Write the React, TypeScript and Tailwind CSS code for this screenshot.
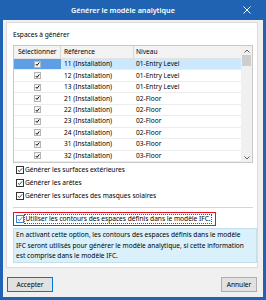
import React from 'react';

const rows = [
  { ref: '11 (Installation)', niveau: '01-Entry Level' },
  { ref: '12 (Installation)', niveau: '01-Entry Level' },
  { ref: '13 (Installation)', niveau: '01-Entry Level' },
  { ref: '21 (Installation)', niveau: '02-Floor' },
  { ref: '22 (Installation)', niveau: '02-Floor' },
  { ref: '23 (Installation)', niveau: '02-Floor' },
  { ref: '24 (Installation)', niveau: '02-Floor' },
  { ref: '31 (Installation)', niveau: '03-Floor' },
  { ref: '32 (Installation)', niveau: '03-Floor' },
];

const Check: React.FC<{ size?: number; blue?: boolean }> = ({ size = 8, blue }) => (
  <span
    className={`shrink-0 flex items-center justify-center bg-white border ${blue ? 'border-[#3c7fd1]' : 'border-[#333]'}`}
    style={{ width: size, height: size }}
  >
    <svg viewBox="0 0 10 10" width={size - 2} height={size - 2}>
      <path d="M1.5 5.2 L4 7.6 L8.6 2.2" fill="none" stroke={blue ? '#2a6fc9' : '#222'} strokeWidth="1.4" />
    </svg>
  </span>
);

const SmallCheck: React.FC = () => (
  <span className="flex items-center justify-center w-[7px] h-[7px] bg-[#f4f4f4] border border-[#b5b5b5]">
    <svg viewBox="0 0 10 10" width={6} height={6}>
      <path d="M1.5 5 L4 7.8 L8.6 2" fill="none" stroke="#111" strokeWidth="2" />
    </svg>
  </span>
);

const App: React.FC = () => {
  return (
    <div
      className="w-[266px] h-[300px] bg-[#1f63b2] flex flex-col px-[3px] pb-[3px] text-black"
      style={{ fontFamily: '"Noto Sans", "Open Sans", sans-serif' }}
    >
      {/* Barre de titre */}
      <div className="h-[20px] flex items-center relative">
        <span className="ml-[68px] text-white text-[7.2px] font-semibold">Générer le modèle analytique</span>
        <svg className="absolute right-[12px] top-[6px]" width="8" height="8" viewBox="0 0 8 8">
          <path d="M0.5 0.5 L7.5 7.5 M7.5 0.5 L0.5 7.5" stroke="#fff" strokeWidth="1" />
        </svg>
      </div>

      <div className="flex-1 bg-[#f0f0f0] flex flex-col pt-[2px]">
        {/* Panneau principal */}
        <div className="ml-[3px] mr-[5px] h-[246px] bg-white border border-[#dcdcdc] pl-[6px] pr-[1px] flex flex-col text-[6.6px]">
          <div className="h-[22px] pt-[7px] leading-[10px]">Espaces à générer</div>

          {/* Tableau */}
          <div className="w-[240px] h-[118px] border border-[#c8c8c8] flex">
            <div className="flex-1 flex flex-col">
              <div className="h-[13px] flex bg-[#f3f3f3] border-b border-[#e2e2e2] items-center">
                <div className="w-[47px] pl-[4px] border-r border-[#d9d9d9] h-full flex items-center">Sélectionner</div>
                <div className="w-[73px] pl-[3px] border-r border-[#d9d9d9] h-full flex items-center">Référence</div>
                <div className="flex-1 pl-[2px]">Niveau</div>
              </div>
              {rows.map((r, i) => (
                <div key={r.ref} className="h-[11.6px] flex items-center border-b border-[#ececec]">
                  <div className={`w-[47px] h-full flex items-center justify-center ${i === 0 ? 'bg-[#5d9ee4]' : ''}`}>
                    <SmallCheck />
                  </div>
                  <div className={`w-[73px] h-full flex items-center pl-[3px] ${i === 0 ? 'bg-[#cce8ff]' : ''}`}>{r.ref}</div>
                  <div className={`flex-1 h-full flex items-center pl-[2px] ${i === 0 ? 'bg-[#cce8ff]' : ''}`}>{r.niveau}</div>
                </div>
              ))}
            </div>
            {/* Barre de défilement */}
            <div className="w-[11px] bg-[#f0f0f0] flex flex-col items-center">
              <div className="h-[9px] flex items-center justify-center">
                <svg width="6" height="4" viewBox="0 0 6 4">
                  <path d="M0.5 3.5 L3 1 L5.5 3.5" fill="none" stroke="#606060" strokeWidth="1" />
                </svg>
              </div>
              <div className="w-[9px] h-[11px] bg-[#cdcdcd]" />
              <div className="flex-1" />
              <div className="h-[9px] flex items-center justify-center">
                <svg width="6" height="4" viewBox="0 0 6 4">
                  <path d="M0.5 0.5 L3 3 L5.5 0.5" fill="none" stroke="#606060" strokeWidth="1" />
                </svg>
              </div>
            </div>
          </div>

          {/* Options */}
          <div className="flex flex-col gap-[5px] mt-[3px] pl-[3px] leading-[8px]">
            <label className="flex items-center gap-[1px] h-[8px]"><Check />Générer les surfaces extérieures</label>
            <label className="flex items-center gap-[1px] h-[8px]"><Check />Générer les arêtes</label>
            <label className="flex items-center gap-[1px] h-[8px]"><Check />Générer les surfaces des masques solaires</label>
          </div>

          <div className="mt-[7px] w-[240px] border-t border-[#d6d6d6]" />

          <div className="mt-[4px] w-[203px] h-[14px] border-[1.5px] border-[#e81123] flex items-center pl-[2px] gap-[1px] whitespace-nowrap">
            <Check blue />
            <span className="outline outline-1 outline-dotted outline-[#555] leading-[8px] px-[0.5px]">
              Utiliser les contours des espaces définis dans le modèle IFC.
            </span>
          </div>

          <div className="mt-[2px] w-[244px] h-[35px] bg-[#daf0fa] border border-[#c4dfea] px-[2px] pt-[1px] leading-[10.5px] whitespace-nowrap">
            En activant cette option, les contours des espaces définis dans le modèle
            <br />
            IFC seront utilisés pour générer le modèle analytique, si cette information
            <br />
            est comprise dans le modèle IFC.
          </div>
        </div>

        {/* Boutons */}
        <div className="flex-1 flex items-start justify-between pl-[4px] pr-[6px] pt-[9px] text-[6.6px]">
          <button className="w-[46px] h-[15px] bg-[#e1e1e1] border border-[#0078d7] flex items-center justify-center">
            Accepter
          </button>
          <button className="w-[36px] h-[15px] bg-[#e1e1e1] border border-[#adadad] flex items-center justify-center">
            Annuler
          </button>
        </div>
      </div>
    </div>
  );
};

export default App;
